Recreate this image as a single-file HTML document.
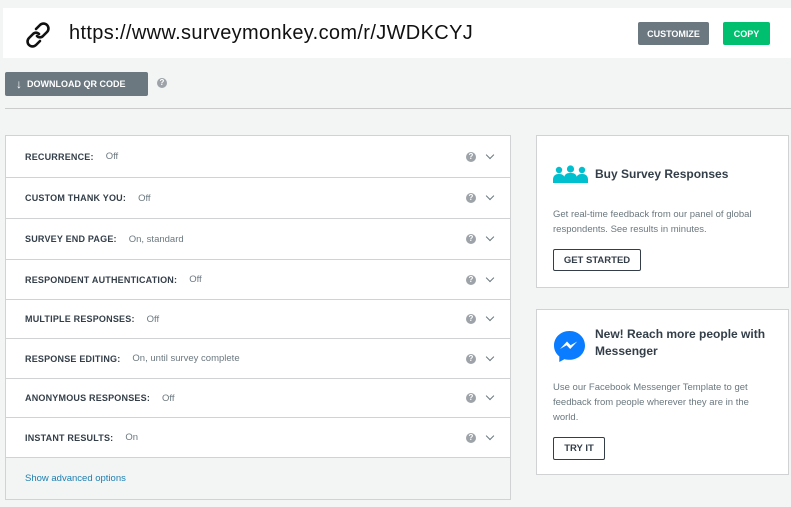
<!DOCTYPE html>
<html><head><style>
*{box-sizing:border-box;margin:0;padding:0}
body{width:791px;height:507px;background:#f3f4f4;font-family:"Liberation Sans",sans-serif;position:relative;overflow:hidden;color:#333e48}
.abs{position:absolute}
.top{left:3px;top:8px;width:788px;height:50px;background:#fff}
.btn{position:absolute;color:#fff;font-size:9px;font-weight:bold;display:flex;align-items:center;justify-content:center;border-radius:2px}
.q{display:inline-block;width:10px;height:10px;border-radius:50%;background:#9da3a8;color:#fff;font-size:8px;font-weight:bold;text-align:center;line-height:10px}
.panel{left:5px;top:135px;width:506px;height:365px;background:#fff;border:1px solid #d0d2d3}
.row{position:absolute;left:0;width:504px;border-bottom:1px solid #d0d2d3;display:flex;align-items:center;padding-left:19px;font-size:9px}
.row b{font-weight:bold;color:#333e48;letter-spacing:.2px}
.row span.v{color:#6b787f;margin-left:12px;font-size:9.5px}
.row .q{position:absolute;left:460px}
.row .ch{position:absolute;left:481px;top:50%;margin-top:-5px;width:6px;height:6px;border-right:1px solid #6b787f;border-bottom:1px solid #6b787f;transform:rotate(45deg)}
.card{position:absolute;left:536px;width:253px;background:#fff;border:1px solid #d0d2d3}
.card h3{position:absolute;left:58px;font-size:12px;font-weight:bold;color:#333e48;line-height:17px}
.card p{position:absolute;left:16px;font-size:9.5px;color:#6b787f;line-height:15px}
.ob{position:absolute;left:16px;border:1px solid #333e48;font-size:9.5px;font-weight:bold;display:flex;align-items:center;justify-content:center;border-radius:2px}
</style></head><body>
<div class="abs top"></div>
<svg class="abs" style="left:24px;top:21px" width="28" height="28" viewBox="0 0 28 28" fill="none" stroke="#111" stroke-width="2.6" stroke-linecap="round">
<path d="M12 8 l4-4 a4 4 0 0 1 7 7 l-4 4 a4 4 0 0 1 -6 0"/><path d="M16 20 l-4 4 a4 4 0 0 1 -7 -7 l4 -4 a4 4 0 0 1 6 0"/></svg>
<div class="abs" style="left:69px;top:22px;font-size:20px;letter-spacing:.35px;color:#111">https://www.surveymonkey.com/r/JWDKCYJ</div>
<div class="btn" style="left:638px;top:22px;width:71px;height:23px;background:#6b7880">CUSTOMIZE</div>
<div class="btn" style="left:723px;top:22px;width:47px;height:23px;background:#00bf6f">COPY</div>
<div class="btn" style="left:5px;top:72px;width:143px;height:24px;background:#6b7880;justify-content:flex-start;padding-left:11px"><span style="font-size:12px;font-weight:normal">↓</span>&nbsp;&nbsp;DOWNLOAD QR CODE</div>
<span class="q abs" style="left:157px;top:78px">?</span>
<div class="abs" style="left:5px;top:108px;width:786px;height:1px;background:#ccc"></div>
<div class="abs panel">
<div class="row" style="top:0;height:42px"><b>RECURRENCE:</b><span class="v">Off</span><span class="q">?</span><span class="ch"></span></div>
<div class="row" style="top:42px;height:41px"><b>CUSTOM THANK YOU:</b><span class="v">Off</span><span class="q">?</span><span class="ch"></span></div>
<div class="row" style="top:83px;height:41px"><b>SURVEY END PAGE:</b><span class="v">On, standard</span><span class="q">?</span><span class="ch"></span></div>
<div class="row" style="top:124px;height:40px"><b>RESPONDENT AUTHENTICATION:</b><span class="v">Off</span><span class="q">?</span><span class="ch"></span></div>
<div class="row" style="top:164px;height:39px"><b>MULTIPLE RESPONSES:</b><span class="v">Off</span><span class="q">?</span><span class="ch"></span></div>
<div class="row" style="top:203px;height:40px"><b>RESPONSE EDITING:</b><span class="v">On, until survey complete</span><span class="q">?</span><span class="ch"></span></div>
<div class="row" style="top:243px;height:39px"><b>ANONYMOUS RESPONSES:</b><span class="v">Off</span><span class="q">?</span><span class="ch"></span></div>
<div class="row" style="top:282px;height:40px"><b>INSTANT RESULTS:</b><span class="v">On</span><span class="q">?</span><span class="ch"></span></div>
<div class="row" style="top:322px;height:41px;background:#f3f4f4;border:none"><span style="color:#1e7fb0;font-size:9.5px">Show advanced options</span></div>
</div>
<div class="card" style="top:135px;height:153px">
<svg class="abs" style="left:16px;top:29px" width="35" height="18" viewBox="0 0 35 18" fill="#00bfce">
<circle cx="6" cy="5" r="3.2"/><circle cx="17.5" cy="4" r="3.6"/><circle cx="29" cy="5" r="3.2"/>
<path d="M0 18 v-4 a5 5 0 0 1 5-5 h2 a5 5 0 0 1 5 5v4z"/><path d="M11 18 v-5 a5 5 0 0 1 5-5 h3 a5 5 0 0 1 5 5v5z"/><path d="M23 18 v-4 a5 5 0 0 1 5-5 h2 a5 5 0 0 1 5 5v4z"/></svg>
<h3 style="top:30px">Buy Survey Responses</h3>
<p style="top:71px">Get real-time feedback from our panel of global<br>respondents. See results in minutes.</p>
<div class="ob" style="top:113px;width:88px;height:22px">GET STARTED</div>
</div>
<div class="card" style="top:309px;height:166px">
<svg class="abs" style="left:16px;top:20px" width="33" height="34" viewBox="0 0 33 34">
<path d="M16.5 1C7.5 1 1 7.5 1 15.5c0 4.5 2 8.3 5.3 10.9V32l5.2-2.9c1.6.5 3.3.7 5 .7 9 0 15.5-6.5 15.5-14.3S25.5 1 16.5 1z" fill="#0a7cff"/>
<path d="M7 19l7-7.5 3.6 3.7 6.6-3.7-7 7.5-3.6-3.7z" fill="#fff"/></svg>
<h3 style="top:16px">New! Reach more people with<br>Messenger</h3>
<p style="top:70px">Use our Facebook Messenger Template to get<br>feedback from people wherever they are in the<br>world.</p>
<div class="ob" style="top:127px;width:52px;height:23px">TRY IT</div>
</div>
</body></html>
